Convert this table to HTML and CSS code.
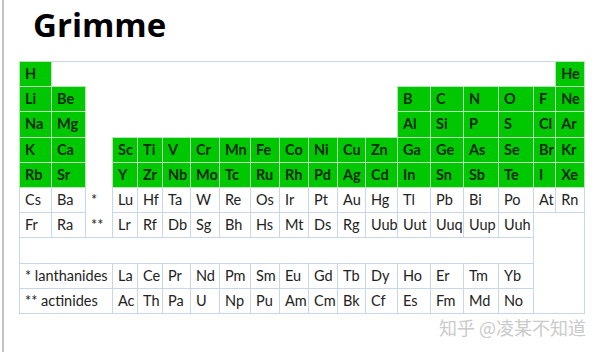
FILE: index.html
```html
<!DOCTYPE html>
<html>
<head>
<meta charset="utf-8">
<link rel="stylesheet" href="styles.css">
</head>
<body>
<div class="slide">
  <h1 class="title">Grimme</h1>
  <table class="pt">
    <colgroup>
      <col style="width:32px"><col style="width:34px"><col style="width:27px"><col style="width:25px"><col style="width:25px"><col style="width:28px"><col style="width:29px"><col style="width:31px"><col style="width:29px"><col style="width:29px"><col style="width:29px"><col style="width:28px"><col style="width:32px"><col style="width:33px"><col style="width:33px"><col style="width:35px"><col style="width:35px"><col style="width:22px"><col style="width:29px">
    </colgroup>
    <tr>
      <td class="g">H</td>
      <td class="topline" colspan="17"></td>
      <td class="g">He</td>
    </tr>
    <tr>
      <td class="g">Li</td><td class="g">Be</td>
      <td class="n" colspan="11" rowspan="2"></td>
      <td class="g">B</td><td class="g">C</td><td class="g">N</td><td class="g">O</td><td class="g">F</td><td class="g">Ne</td>
    </tr>
    <tr>
      <td class="g">Na</td><td class="g">Mg</td>
      <td class="g">Al</td><td class="g">Si</td><td class="g">P</td><td class="g">S</td><td class="g">Cl</td><td class="g">Ar</td>
    </tr>
    <tr>
      <td class="g">K</td><td class="g">Ca</td>
      <td class="n" rowspan="2"></td>
      <td class="g">Sc</td><td class="g">Ti</td><td class="g">V</td><td class="g">Cr</td><td class="g">Mn</td><td class="g">Fe</td><td class="g">Co</td><td class="g">Ni</td><td class="g">Cu</td><td class="g">Zn</td>
      <td class="g">Ga</td><td class="g">Ge</td><td class="g">As</td><td class="g">Se</td><td class="g">Br</td><td class="g">Kr</td>
    </tr>
    <tr>
      <td class="g">Rb</td><td class="g">Sr</td>
      <td class="g">Y</td><td class="g">Zr</td><td class="g">Nb</td><td class="g">Mo</td><td class="g">Tc</td><td class="g">Ru</td><td class="g">Rh</td><td class="g">Pd</td><td class="g">Ag</td><td class="g">Cd</td>
      <td class="g">In</td><td class="g">Sn</td><td class="g">Sb</td><td class="g">Te</td><td class="g">I</td><td class="g">Xe</td>
    </tr>
    <tr>
      <td>Cs</td><td>Ba</td><td class="star">*</td>
      <td>Lu</td><td>Hf</td><td>Ta</td><td>W</td><td>Re</td><td>Os</td><td>Ir</td><td>Pt</td><td>Au</td><td>Hg</td>
      <td>Tl</td><td>Pb</td><td>Bi</td><td>Po</td><td>At</td><td>Rn</td>
    </tr>
    <tr>
      <td>Fr</td><td>Ra</td><td class="star">**</td>
      <td>Lr</td><td>Rf</td><td>Db</td><td>Sg</td><td>Bh</td><td>Hs</td><td>Mt</td><td>Ds</td><td>Rg</td><td>Uub</td>
      <td>Uut</td><td>Uuq</td><td>Uup</td><td>Uuh</td>
      <td class="corner" colspan="2" rowspan="4"></td>
    </tr>
    <tr>
      <td colspan="17"></td>
    </tr>
    <tr>
      <td colspan="3">* lanthanides</td>
      <td>La</td><td>Ce</td><td>Pr</td><td>Nd</td><td>Pm</td><td>Sm</td><td>Eu</td><td>Gd</td><td>Tb</td><td>Dy</td><td>Ho</td><td>Er</td><td>Tm</td><td>Yb</td>
    </tr>
    <tr>
      <td colspan="3">** actinides</td>
      <td>Ac</td><td>Th</td><td>Pa</td><td>U</td><td>Np</td><td>Pu</td><td>Am</td><td>Cm</td><td>Bk</td><td>Cf</td><td>Es</td><td>Fm</td><td>Md</td><td>No</td>
    </tr>
  </table>
  <div class="watermark">知乎 @凌某不知道</div>
</div>
</body>
</html>
```
FILE: styles.css
```css
html, body {
  margin: 0;
  padding: 0;
  background: #ffffff;
}
.slide {
  position: relative;
  width: 598px;
  height: 352px;
  margin-left: 2px;
  border-left: 2px solid #c4c4c4;
  box-sizing: border-box;
  font-family: "Lato", "Open Sans", sans-serif;
}
.title {
  margin: 0;
  padding: 5.5px 0 0 29px;
  height: 61px;
  box-sizing: border-box;
  font-family: "Open Sans", sans-serif;
  font-weight: 700;
  font-size: 33px;
  line-height: 38px;
  color: #000;
}
.pt {
  margin-left: 15px;
  border-collapse: collapse;
  table-layout: fixed;
  width: 565px;
  font-size: 14.5px;
  color: #222;
}
.pt td {
  height: 24.2px;
  padding: 0 0 0 5px;
  border: 1px solid #c8d6e9;
  white-space: nowrap;
  overflow: hidden;
  vertical-align: middle;
  line-height: 16px;
}
.pt td.g {
  background: #00c800;
  color: #0c2a0c;
  font-weight: 700;
  border-color: #b8e6b8;
}
.pt td.n {
  border: none;
}
.pt td.topline {
  border: none;
  border-top: 1px solid #c8d6e9;
}
.pt td.star {
  border-top: none;
  border-bottom: none;
}
.pt td.corner {
  border-left: none;
  border-top: none;
}
.watermark {
  position: absolute;
  left: 435px;
  top: 314px;
  font-family: "Noto Sans CJK SC", sans-serif;
  font-size: 18px;
  color: #cacaca;
  white-space: nowrap;
}
```
